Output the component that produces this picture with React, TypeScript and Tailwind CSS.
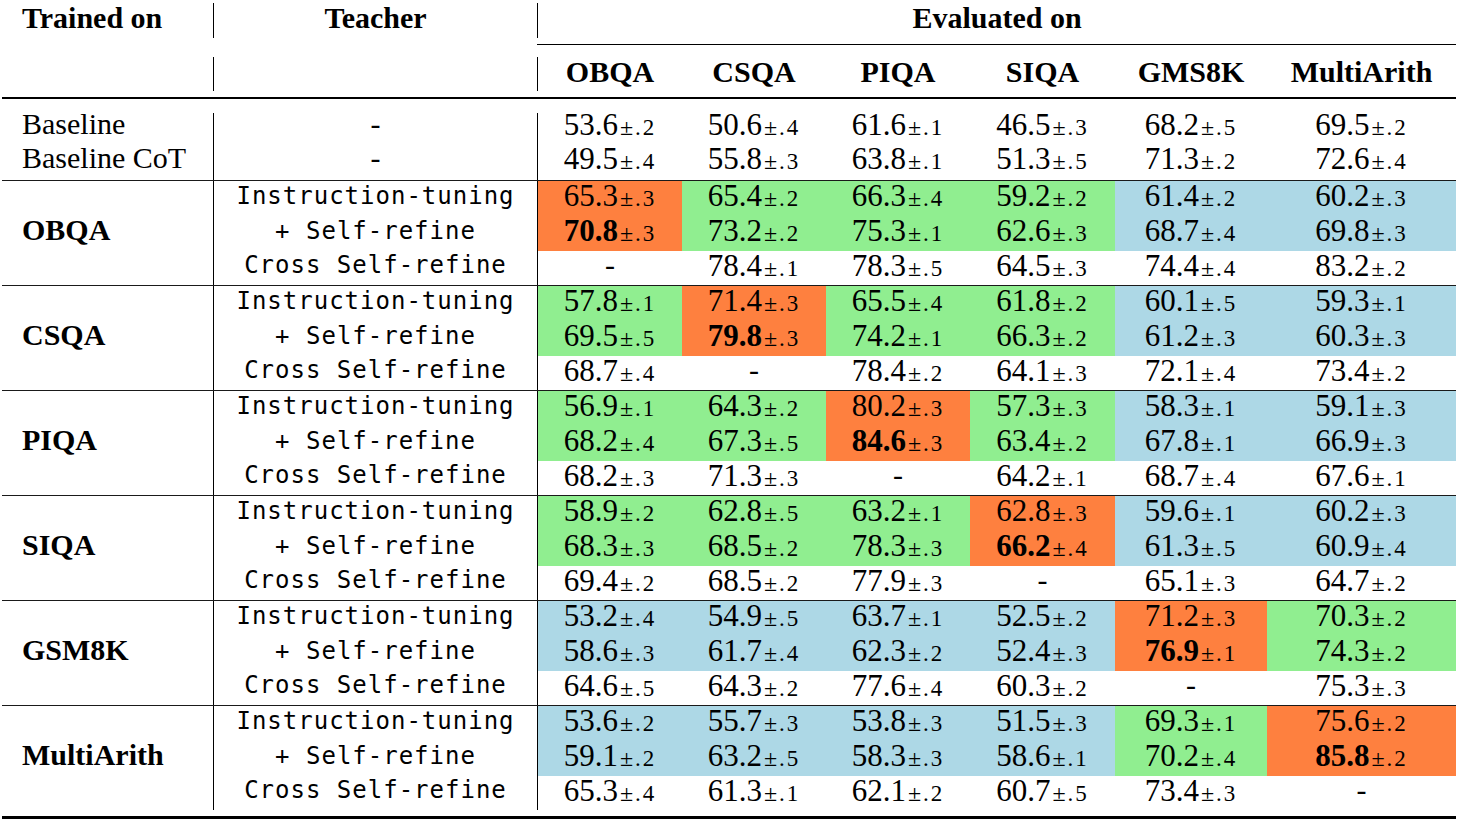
import React from "react";

type Cell = { v: string; b?: boolean };
type Color = "O" | "G" | "B";

const COLS = ["OBQA", "CSQA", "PIQA", "SIQA", "GMS8K", "MultiArith"];
const WIDTHS = ["w-[144px]", "w-[144px]", "w-[144px]", "w-[145px]", "w-[152px]", "w-[189px]"];

const BG: Record<Color, string> = {
  O: "bg-[#fe803f]",
  G: "bg-[#90ee90]",
  B: "bg-[#add8e6]",
};

const p = (s: string): Cell => {
  if (s.startsWith("*")) return { v: s.slice(1), b: true };
  return { v: s };
};

const baseline = [
  ["53.6±.2", "50.6±.4", "61.6±.1", "46.5±.3", "68.2±.5", "69.5±.2"],
  ["49.5±.4", "55.8±.3", "63.8±.1", "51.3±.5", "71.3±.2", "72.6±.4"],
];

const groups: { name: string; colors: Color[]; rows: string[][] }[] = [
  {
    name: "OBQA",
    colors: ["O", "G", "G", "G", "B", "B"],
    rows: [
      ["65.3±.3", "65.4±.2", "66.3±.4", "59.2±.2", "61.4±.2", "60.2±.3"],
      ["*70.8±.3", "73.2±.2", "75.3±.1", "62.6±.3", "68.7±.4", "69.8±.3"],
      ["-", "78.4±.1", "78.3±.5", "64.5±.3", "74.4±.4", "83.2±.2"],
    ],
  },
  {
    name: "CSQA",
    colors: ["G", "O", "G", "G", "B", "B"],
    rows: [
      ["57.8±.1", "71.4±.3", "65.5±.4", "61.8±.2", "60.1±.5", "59.3±.1"],
      ["69.5±.5", "*79.8±.3", "74.2±.1", "66.3±.2", "61.2±.3", "60.3±.3"],
      ["68.7±.4", "-", "78.4±.2", "64.1±.3", "72.1±.4", "73.4±.2"],
    ],
  },
  {
    name: "PIQA",
    colors: ["G", "G", "O", "G", "B", "B"],
    rows: [
      ["56.9±.1", "64.3±.2", "80.2±.3", "57.3±.3", "58.3±.1", "59.1±.3"],
      ["68.2±.4", "67.3±.5", "*84.6±.3", "63.4±.2", "67.8±.1", "66.9±.3"],
      ["68.2±.3", "71.3±.3", "-", "64.2±.1", "68.7±.4", "67.6±.1"],
    ],
  },
  {
    name: "SIQA",
    colors: ["G", "G", "G", "O", "B", "B"],
    rows: [
      ["58.9±.2", "62.8±.5", "63.2±.1", "62.8±.3", "59.6±.1", "60.2±.3"],
      ["68.3±.3", "68.5±.2", "78.3±.3", "*66.2±.4", "61.3±.5", "60.9±.4"],
      ["69.4±.2", "68.5±.2", "77.9±.3", "-", "65.1±.3", "64.7±.2"],
    ],
  },
  {
    name: "GSM8K",
    colors: ["B", "B", "B", "B", "O", "G"],
    rows: [
      ["53.2±.4", "54.9±.5", "63.7±.1", "52.5±.2", "71.2±.3", "70.3±.2"],
      ["58.6±.3", "61.7±.4", "62.3±.2", "52.4±.3", "*76.9±.1", "74.3±.2"],
      ["64.6±.5", "64.3±.2", "77.6±.4", "60.3±.2", "-", "75.3±.3"],
    ],
  },
  {
    name: "MultiArith",
    colors: ["B", "B", "B", "B", "G", "O"],
    rows: [
      ["53.6±.2", "55.7±.3", "53.8±.3", "51.5±.3", "69.3±.1", "75.6±.2"],
      ["59.1±.2", "63.2±.5", "58.3±.3", "58.6±.1", "70.2±.4", "*85.8±.2"],
      ["65.3±.4", "61.3±.1", "62.1±.2", "60.7±.5", "73.4±.3", "-"],
    ],
  },
];

function Num({ s }: { s: string }) {
  const c = p(s);
  if (c.v === "-") return <span className="text-[30px]">-</span>;
  const [main, sd] = c.v.split("±");
  return (
    <span className="whitespace-nowrap">
      <span className={`text-[31px] ${c.b ? "font-bold" : ""}`}>{main}</span>
      <span className="text-[24px] ml-[2px] mr-[2px]">±</span>
      <span className="text-[23px] tracking-[2px]">{sd}</span>
    </span>
  );
}

function DataRow({ s, h }: { s: string; h: string }) {
  return (
    <div className={`${h} flex items-center justify-center pb-[6px] leading-none`}>
      <Num s={s} />
    </div>
  );
}

function MonoRow({ t, h }: { t: string; h: string }) {
  return (
    <div
      className={`${h} flex items-center justify-center pb-[6px] leading-none whitespace-pre font-['DejaVu_Sans_Mono',monospace] text-[24px] tracking-[1px]`}
    >
      {t}
    </div>
  );
}

function Sep({ cls = "" }: { cls?: string }) {
  return <div className={`w-[1px] shrink-0 bg-black ${cls}`} />;
}

function Group({ g }: { g: (typeof groups)[number] }) {
  return (
    <div className="flex h-[104px]">
      <div className="w-[211px] shrink-0 flex items-center pl-[20px] pb-[6px] font-bold text-[30px] leading-none">
        {g.name}
      </div>
      <Sep />
      <div className="w-[323px] shrink-0 flex flex-col">
        <MonoRow t="Instruction-tuning" h="h-[35px]" />
        <MonoRow t="+ Self-refine" h="h-[35px]" />
        <MonoRow t="Cross Self-refine" h="h-[34px]" />
      </div>
      <Sep />
      {COLS.map((_, ci) => (
        <div key={ci} className={`${WIDTHS[ci]} shrink-0 flex flex-col`}>
          <div className={`${BG[g.colors[ci]]} flex flex-col`}>
            <DataRow s={g.rows[0][ci]} h="h-[35px]" />
            <DataRow s={g.rows[1][ci]} h="h-[35px]" />
          </div>
          <DataRow s={g.rows[2][ci]} h="h-[34px]" />
        </div>
      ))}
    </div>
  );
}

export default function App() {
  return (
    <div className="w-[1460px] h-[822px] bg-white text-black overflow-hidden font-['Liberation_Serif','Times_New_Roman',serif]">
      <div className="ml-[2px] w-[1454px] flex flex-col">
        {/* header row 1 */}
        <div className="flex h-[44px]">
          <div className="w-[211px] shrink-0 flex items-center pl-[20px] pb-[8px] font-bold text-[30px] leading-none">
            Trained on
          </div>
          <Sep cls="mt-[3px] mb-[6px]" />
          <div className="w-[323px] shrink-0 flex items-center justify-center pb-[8px] font-bold text-[30px] leading-none">
            Teacher
          </div>
          <Sep cls="mt-[3px] mb-[6px]" />
          <div className="flex-1 flex items-center justify-center pb-[8px] font-bold text-[30px] leading-none">
            Evaluated on
          </div>
        </div>
        {/* cmidrule */}
        <div className="flex h-[1px]">
          <div className="w-[535px] shrink-0" />
          <div className="flex-1 bg-black" />
        </div>
        {/* header row 2 */}
        <div className="flex h-[52px]">
          <div className="w-[211px] shrink-0" />
          <Sep cls="mt-[12px] mb-[6px]" />
          <div className="w-[323px] shrink-0" />
          <Sep cls="mt-[12px] mb-[6px]" />
          {COLS.map((c, ci) => (
            <div
              key={c}
              className={`${WIDTHS[ci]} shrink-0 flex items-center justify-center pt-[1px] font-bold text-[30px] leading-none`}
            >
              {c}
            </div>
          ))}
        </div>
        {/* midrule */}
        <div className="h-[2px] bg-black" />
        {/* baseline section */}
        <div className="flex h-[81px]">
          <div className="w-[211px] shrink-0 flex flex-col pt-[11px] pl-[20px] text-[30px] leading-none">
            <div className="h-[34px] flex items-center pb-[6px]">Baseline</div>
            <div className="h-[34px] flex items-center pb-[6px]">Baseline CoT</div>
          </div>
          <Sep cls="mt-[14px]" />
          <div className="w-[323px] shrink-0 flex flex-col pt-[11px] text-[30px] leading-none">
            <div className="h-[34px] flex items-center justify-center pb-[6px]">-</div>
            <div className="h-[34px] flex items-center justify-center pb-[6px]">-</div>
          </div>
          <Sep cls="mt-[14px]" />
          {COLS.map((c, ci) => (
            <div key={c} className={`${WIDTHS[ci]} shrink-0 flex flex-col pt-[11px]`}>
              <DataRow s={baseline[0][ci]} h="h-[34px]" />
              <DataRow s={baseline[1][ci]} h="h-[34px]" />
            </div>
          ))}
        </div>
        {groups.map((g) => (
          <React.Fragment key={g.name}>
            <div className="h-[1px] bg-[#1a1a1a]" />
            <Group g={g} />
          </React.Fragment>
        ))}
        <div className="h-[6px]" />
        <div className="h-[3px] bg-black" />
      </div>
    </div>
  );
}
